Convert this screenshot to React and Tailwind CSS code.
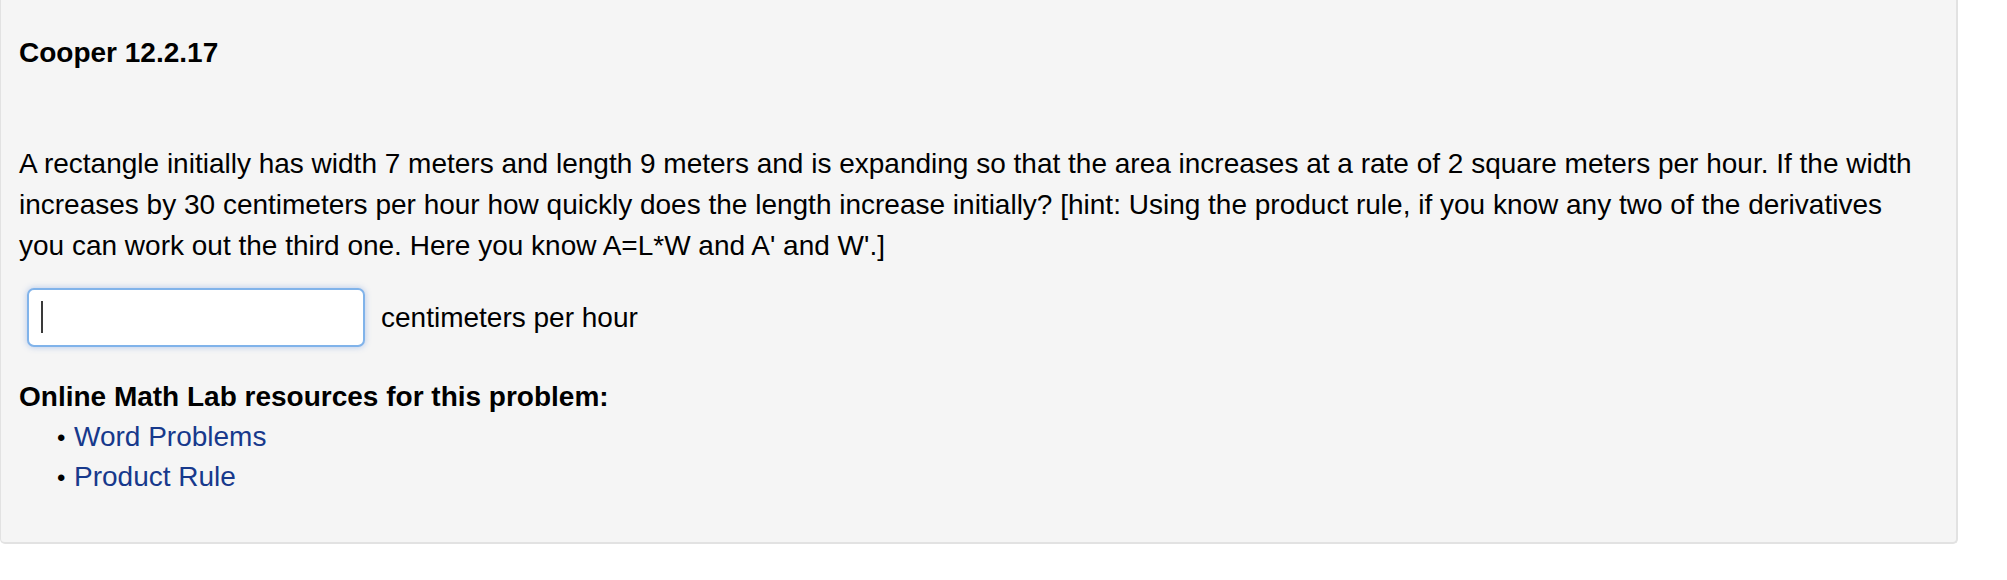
import React from "react";

export default function App() {
  return (
    <div className="w-[2007px] h-[580px] bg-white overflow-hidden" style={{ fontFamily: '"Liberation Sans", Arial, Helvetica, sans-serif' }}>
      <div className="w-[1958px] bg-[#f5f5f5] border-l border-r-2 border-b-2 border-[#e2e2e2] rounded-b-[5px] pl-[18px] pr-[22px] pt-[37px] pb-[45px] text-black">
        <h1 className="text-[28px] leading-[32px] font-bold">Cooper 12.2.17</h1>
        <p className="mt-[74px] text-[28px] leading-[41px]">
          A rectangle initially has width 7 meters and length 9 meters and is expanding so that the area increases at a rate of 2 square meters per hour. If the width increases by 30 centimeters per hour how quickly does the length increase initially? [hint: Using the product rule, if you know any two of the derivatives you can work out the third one. Here you know A=L*W and A' and W'.]
        </p>
        <div className="mt-[22px] flex items-center gap-[16px]">
          <div className="relative ml-[8px]">
            <input
              type="text"
              className="block w-[338px] h-[59px] bg-white border-2 border-[#80b3ea] rounded-[7px] shadow-[0_0_6px_rgba(90,140,220,0.45)] outline-none"
            />
            <span className="absolute left-[14px] top-[13px] w-[2px] h-[32px] bg-[#3a3a3a]"></span>
          </div>
          <span className="text-[28px] leading-[41px]">centimeters per hour</span>
        </div>
        <div className="mt-[30px] text-[28px] leading-[40px] font-bold">Online Math Lab resources for this problem:</div>
        <ul className="text-[28px] leading-[40px]">
          <li className="flex items-baseline h-[40px] pl-[38px]">
            <span className="w-[17px] text-[24px] leading-[40px]">•</span>
            <a href="#" className="text-[#17398c] leading-[40px]">Word Problems</a>
          </li>
          <li className="flex items-baseline h-[40px] pl-[38px]">
            <span className="w-[17px] text-[24px] leading-[40px]">•</span>
            <a href="#" className="text-[#17398c] leading-[40px]">Product Rule</a>
          </li>
        </ul>
      </div>
    </div>
  );
}
